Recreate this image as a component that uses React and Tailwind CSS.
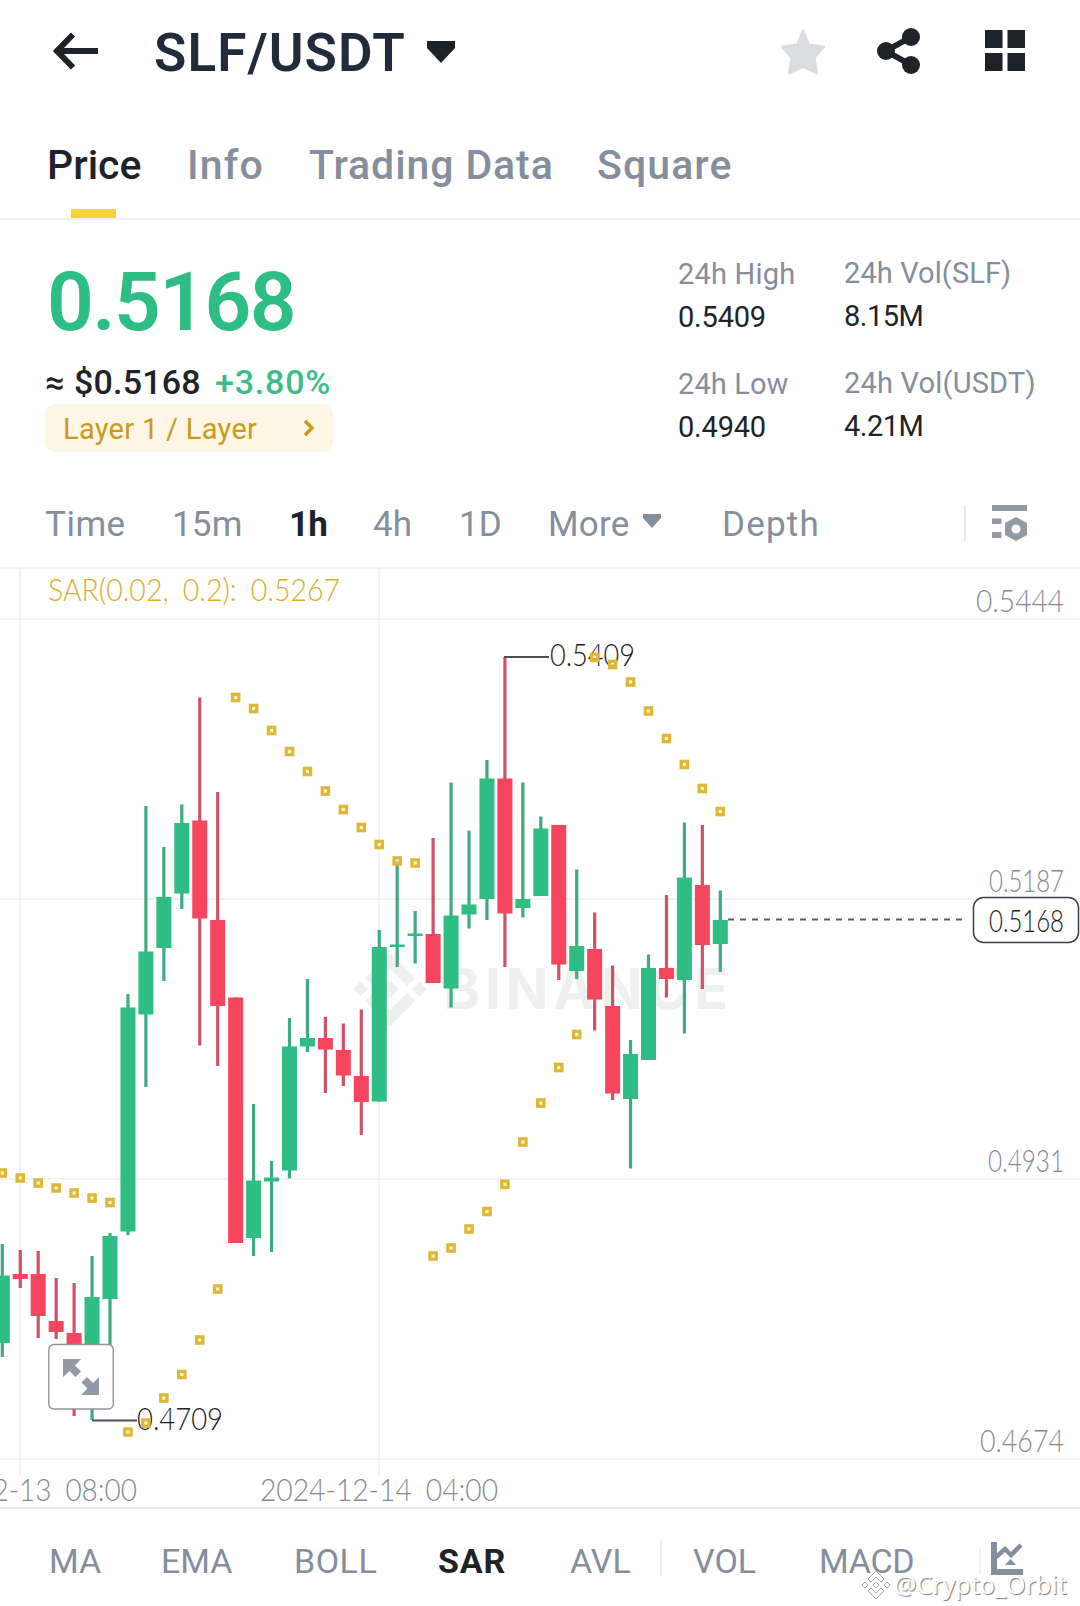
import React, { useState } from 'react';

const GREEN = '#2ebd85';
const RED = '#f6465d';

// [direction, high, body top, body bottom, low]
const candles = [
  ['up', 1244, 1275.5, 1343, 1357],
  ['down', 1250, 1274, 1279, 1288],
  ['down', 1251, 1274, 1316, 1338],
  ['down', 1278, 1321, 1332, 1339],
  ['down', 1283, 1333, 1380, 1416],
  ['up', 1256, 1297, 1400, 1420],
  ['up', 1233, 1236, 1299, 1350],
  ['up', 994, 1007.5, 1231.5, 1235],
  ['up', 806, 951.5, 1014.5, 1087],
  ['up', 847, 897, 948, 981],
  ['up', 804.5, 823, 893.5, 909],
  ['down', 697.5, 820.5, 918.5, 1045.5],
  ['down', 792, 920, 1006, 1066],
  ['down', 997.5, 997.5, 1243, 1243],
  ['up', 1104, 1180.5, 1238, 1256],
  ['up', 1161, 1177.5, 1181.5, 1252],
  ['up', 1018, 1046.5, 1170.5, 1178.5],
  ['up', 979, 1038, 1046.5, 1052],
  ['down', 1017, 1038, 1049.5, 1093],
  ['down', 1023.5, 1050, 1075.5, 1086],
  ['down', 1009.5, 1076, 1102, 1135],
  ['up', 930, 947, 1101.5, 1101.5],
  ['up', 861, 944.5, 947, 967],
  ['up', 911, 933.5, 936, 963.5],
  ['down', 838, 934, 983, 983],
  ['up', 782.5, 915.5, 988.5, 1007.5],
  ['up', 830.5, 904.5, 914.5, 928.5],
  ['up', 760, 778.5, 899, 920],
  ['down', 657, 778.5, 913.5, 967],
  ['up', 782.5, 899, 908, 917.5],
  ['up', 816.5, 828.5, 896, 896],
  ['down', 825, 825, 964.5, 980],
  ['up', 869.5, 946, 971, 979],
  ['down', 912.5, 949, 999.5, 1030.5],
  ['down', 965.5, 1006, 1093.5, 1100],
  ['up', 1040, 1054, 1099, 1168.5],
  ['up', 954.5, 968, 1060, 1060],
  ['down', 895, 968, 979, 997.5],
  ['up', 822.5, 877.5, 980, 1033.5],
  ['down', 825, 885, 945, 989],
  ['up', 890.5, 920, 944, 972],
];

const sar = [
  1173, 1178, 1183, 1188, 1193, 1198, 1202.5, 1432, 1423, 1398, 1374.5, 1340, 1289, 697.5,
  708.5, 730.5, 751.5, 771.5, 791, 809.5, 827.5, 844.5, 861, 863, 1256, 1248, 1229, 1211.5,
  1184.3, 1142, 1103, 1067.5, 1034.5, 657.5, 664.5, 682, 711, 738.5, 764.5, 788.5, 811.5,
];

const candleX = (i) => 2.3 + i * 17.95;

const tabs = [
  { name: 'Price', style: 'w-[140px] tracking-[0px]' },
  { name: 'Info', style: 'w-[122px] tracking-[1.2px]' },
  { name: 'Trading Data', style: 'w-[288px] tracking-[0.9px]' },
  { name: 'Square', style: 'w-[160px] tracking-[1.1px]' },
];

function ChartText({ x, y, width, color, anchor = 'start', children }) {
  return (
    <text x={x} y={y} textLength={width} lengthAdjust="spacingAndGlyphs" textAnchor={anchor} fill={color} className="text-[31px] font-light [word-spacing:7px]">
      {children}
    </text>
  );
}

function Chart() {
  return (
    <svg viewBox="0 569 1080 938" className="block h-[938px] w-[1080px] font-['Lato','Open_Sans',sans-serif]">
      {/* Grid */}
      <g stroke="#eeeff1" strokeWidth="1.6">
        {[619, 899, 1179, 1459].map((y) => <line key={y} x1="0" x2="1080" y1={y} y2={y} />)}
        {[20, 379].map((x) => <line key={x} x1={x} x2={x} y1="569" y2="1475" />)}
      </g>

      {/* Watermark */}
      <g fill="#eef0f0">
        <path d="M353 989l7.500-7.500 7.500 7.500-7.500 7.500zM412 989l7.500-7.500 7.500 7.500-7.500 7.500zM381 989l9-9 9 9-9 9zM390 953l25 25-8 8-17-17-17 17-8-8zM390 1026l25-25-8-8-17 17-17-17-8 8z" />
        <text x="443" y="1009" textLength="285" className="font-['Inter',sans-serif] text-[56px] font-bold">BINANCE</text>
      </g>

      {/* Candles */}
      {candles.map(([dir, high, top, bottom, low], i) => (
        <g key={i}>
          <rect x={candleX(i) - 1.6} y={high} width="3.2" height={low - high} fill={dir === 'up' ? '#40ab80' : '#d0526a'} />
          <rect x={candleX(i) - 7.5} y={top} width="15" height={bottom - top} fill={dir === 'up' ? GREEN : RED} />
        </g>
      ))}

      {/* High and low marks */}
      <path d="M504 657H549M92 1420.500H137" stroke="#4b4e55" strokeWidth="2" />
      <ChartText x="550" y="665.5" width="85" color="#1e2026">0.5409</ChartText>
      <ChartText x="137" y="1430" width="86" color="#1e2026">0.4709</ChartText>

      {/* Parabolic SAR */}
      {sar.map((y, i) => (
        <rect key={i} x={candleX(i) - 3.2} y={y - 3.2} width="6.4" height="6.4" fill="#fff2a0" fillOpacity="0.6" stroke="#dfb738" strokeWidth="3.2" />
      ))}
      <ChartText x="48" y="601" width="292" color="#d6ae32">SAR(0.02, 0.2): 0.5267</ChartText>

      {/* Price axis */}
      <ChartText x="1064" y="612" width="88" anchor="end" color="#848a94">0.5444</ChartText>
      <ChartText x="1064" y="892" width="75" anchor="end" color="#848a94">0.5187</ChartText>
      <ChartText x="1064" y="1172" width="76" anchor="end" color="#848a94">0.4931</ChartText>
      <ChartText x="1064" y="1452" width="84" anchor="end" color="#848a94">0.4674</ChartText>
      <line x1="728" x2="962" y1="919.5" y2="919.5" stroke="#5a5d63" strokeWidth="1.8" strokeDasharray="6 6" />
      <rect x="973.500" y="897.500" width="105" height="45" rx="10" fill="#fff" stroke="#3a3e46" strokeWidth="1.500" />
      <ChartText x="1064" y="932" width="75" anchor="end" color="#1e2026">0.5168</ChartText>

      {/* Time axis */}
      <ChartText x="-99" y="1501" width="236" color="#848a94">2024-12-13 08:00</ChartText>
      <ChartText x="260" y="1501" width="238" color="#848a94">2024-12-14 04:00</ChartText>

      {/* Fullscreen button */}
      <rect x="48.800" y="1344.500" width="64.500" height="64.500" rx="5" fill="#fff" stroke="#8f959e" strokeWidth="1.400" />
      <g fill="#929aa5">
        <path d="M63 1359H81L75 1365.500L81 1371.500L75.500 1377L69.500 1371L63 1377Z" />
        <path d="M99 1395H81L87.500 1388.500L81.500 1382.500L87 1377L93 1383L99 1377Z" />
      </g>
    </svg>
  );
}

export default function App() {
  const [tab, setTab] = useState('Price');

  return (
    <div className="relative h-[1606px] w-[1080px] overflow-hidden bg-white font-['Roboto',sans-serif] whitespace-nowrap text-[#1e2329]">
      {/* Header */}
      <header className="flex h-[104px] items-center pl-[53px] pr-[55px]">
        <svg width="45" height="38" viewBox="0 0 45 38" className="-mt-[3px]" fill="none" stroke="#1e2329" strokeWidth="6">
          <path d="M45 19H6M20 2.500L4 19L20 35.500" />
        </svg>
        <h1 className="mt-[2px] ml-[56px] w-[273px] text-[53px] leading-none font-semibold tracking-[1.1px] text-[#222b3b]">SLF/USDT</h1>
        <svg width="28" height="22" viewBox="0 0 28 22" className="-mt-[1px]" fill="#1e2329"><path d="M0 0H28V7L14 22L0 7Z" /></svg>
        <div className="ml-auto flex items-center">
          <svg width="44" height="46" viewBox="0 0 44 46" className="-mt-[1px]" fill="#d9dce1" stroke="#d9dce1" strokeWidth="3" strokeLinejoin="round">
            <path d="M22 2L27.500 16L42.500 18L33 28.500L35.500 44L22 37.500L8.500 44L11 28.500L1.500 18L16.500 16Z" />
          </svg>
          <svg width="43" height="46" viewBox="0 0 43 46" className="ml-[52px] -mt-[3px]" fill="#1e2329">
            <path d="M34 9L9 23L34 37" fill="none" stroke="#1e2329" strokeWidth="6" />
            <circle cx="34" cy="9" r="9" />
            <circle cx="9" cy="23" r="9" />
            <circle cx="34" cy="37" r="9" />
          </svg>
          <svg width="40" height="41" viewBox="0 0 40 41" className="ml-[65px] -mt-[3px]" fill="#1e2329">
            <path d="M0 0H17.500V18H0zM22.500 0H40V18H22.500zM0 23H17.500V41H0zM22.500 23H40V41H22.500z" />
          </svg>
        </div>
      </header>

      {/* Tabs */}
      <nav className="flex h-[116px] border-b-2 border-[#eeeff1] pl-[47px] text-[41px] leading-[123px] font-medium text-[#848e9c]">
        {tabs.map(({ name, style }) => (
          <button key={name} onClick={() => setTab(name)} className={`relative h-full text-left ${style} ${tab === name ? 'text-[#1e2329]' : ''}`}>
            {name}
            {tab === name && <span className="absolute bottom-0 left-[24px] h-[9px] w-[45px] bg-[#f8d33a]" />}
          </button>
        ))}
      </nav>

      {/* Price summary */}
      <section className="flex h-[259px] pl-[45px]">
        <div className="w-[633px] pt-[46px]">
          <div className="h-[72px] pl-[2px] text-[82px] leading-[72px] font-semibold tracking-[-1.6px] text-[#2ebd85]">0.5168</div>
          <div className="mt-[22px] flex h-[44px] text-[34px] leading-[45px] font-medium">
            <span className="w-[29px]">≈</span>
            <span className="w-[141px] tracking-[0.2px]">$0.5168</span>
            <span className="tracking-[0.8px] text-[#3dbb8a]">+3.80%</span>
          </div>
          <div className="flex h-[48px] w-[288px] items-center justify-between rounded-[10px] bg-[#fdf6e4] pr-[18px] pl-[18px] text-[29px] tracking-[0.3px] text-[#c99a1c]">
            <span className="pt-[4px]">Layer 1 / Layer</span>
            <svg width="12" height="18" viewBox="0 0 12 18" fill="none" stroke="#c99a1c" strokeWidth="3.5"><path d="M2 2L9 9L2 16" /></svg>
          </div>
        </div>
        <div className="w-[166px] pt-[33px] text-[29px] leading-[43px]">
          <div className="tracking-[0.2px] text-[#848e9c]">24h High</div>
          <div className="tracking-[-0.2px]">0.5409</div>
          <div className="mt-[24px] tracking-[0.1px] text-[#848e9c]">24h Low</div>
          <div className="tracking-[-0.2px]">0.4940</div>
        </div>
        <div className="pt-[32px] text-[29px] leading-[43px]">
          <div className="tracking-[0.1px] text-[#848e9c]">24h Vol(SLF)</div>
          <div className="tracking-[-0.5px]">8.15M</div>
          <div className="mt-[24px] tracking-[0.2px] text-[#848e9c]">24h Vol(USDT)</div>
          <div className="tracking-[-0.5px]">4.21M</div>
        </div>
      </section>

      {/* Intervals */}
      <nav className="flex h-[90px] items-center border-b-2 border-[#f2f3f4] pl-[45px] text-[35px] text-[#848e9c]">
        <span className="w-[127px] pt-[4px] tracking-[0.5px]">Time</span>
        <span className="w-[117px] pt-[4px] tracking-[0.2px]">15m</span>
        <span className="w-[84px] pt-[4px] font-bold tracking-[-0.8px] text-[#1e2329]">1h</span>
        <span className="w-[86px] pt-[4px]">4h</span>
        <span className="w-[89px] pt-[4px]">1D</span>
        <span className="w-[95px] pt-[4px] tracking-[0.2px]">More</span>
        <svg width="18" height="14" viewBox="0 0 18 14" className="-mt-[5px]" fill="#848e9c"><path d="M0 0H18V4L9 14L0 4Z" /></svg>
        <span className="ml-[61px] w-[242px] pt-[4px] tracking-[1.2px]">Depth</span>
        <span className="-mt-[1px] h-[36px] w-[2px] bg-[#e6e8ea]" />
        <svg width="35" height="36" viewBox="0 0 35 36" className="ml-[26px] -mt-[1px]" fill="#929aa5">
          <path d="M0 0H35V6H0zM0 13.500H9.500V19H0zM0 27H9.500V33H0z" />
          <path fillRule="evenodd" d="M24 12L35 18V30L24 36L13 30V18ZM24 19.500A4.500 4.500 0 1 0 24 28.500A4.500 4.500 0 1 0 24 19.500Z" />
        </svg>
      </nav>

      <Chart />

      {/* Indicators */}
      <footer className="flex h-[99px] items-center border-t-2 border-[#ebecee] pt-[8px] pl-[49px] text-[34px] text-[#848e9c]">
        <span className="w-[112px]">MA</span>
        <span className="w-[133px]">EMA</span>
        <span className="w-[144px] tracking-[0.5px]">BOLL</span>
        <span className="w-[132px] font-bold tracking-[0.8px] text-[#1e2329]">SAR</span>
        <span className="w-[90px]">AVL</span>
        <span className="-mt-[8px] h-[36px] w-[2px] bg-[#e9ebed]" />
        <span className="ml-[31px] w-[126px]">VOL</span>
        <span className="w-[160px] tracking-[-0.3px]">MACD</span>
        <span className="-mt-[2px] h-[26px] w-[2px] bg-[#f0f1f2]" />
        <svg width="32" height="33" viewBox="0 0 32 33" className="-mt-[7px] ml-[10px]" fill="#848e9c">
          <path d="M0 0H6V27H32V33H0Z" />
          <path d="M5 15L14 7L20 13L30 3" fill="none" stroke="#848e9c" strokeWidth="4.500" />
          <path d="M14 23L19.500 17L25 23Z" />
        </svg>
      </footer>

      {/* Author mark */}
      <div className="absolute top-[1567px] left-[861px] flex items-center font-['Noto_Sans',sans-serif] text-[25px] leading-[30px] text-white [text-shadow:1px_1px_1px_#7b7b7b]">
        <svg width="30" height="30" viewBox="0 0 30 30" className="mt-[3px] mr-[3px]" fill="#fff" stroke="#a3a5a8" strokeWidth="0.900">
          <path d="M15 1L23 9L20 12L15 7L10 12L7 9ZM15 29L23 21L20 18L15 23L10 18L7 21ZM15 12L18 15L15 18L12 15ZM4 12L7 15L4 18L1 15ZM26 12L29 15L26 18L23 15Z" />
        </svg>
        @Crypto_Orbit
      </div>
    </div>
  );
}
